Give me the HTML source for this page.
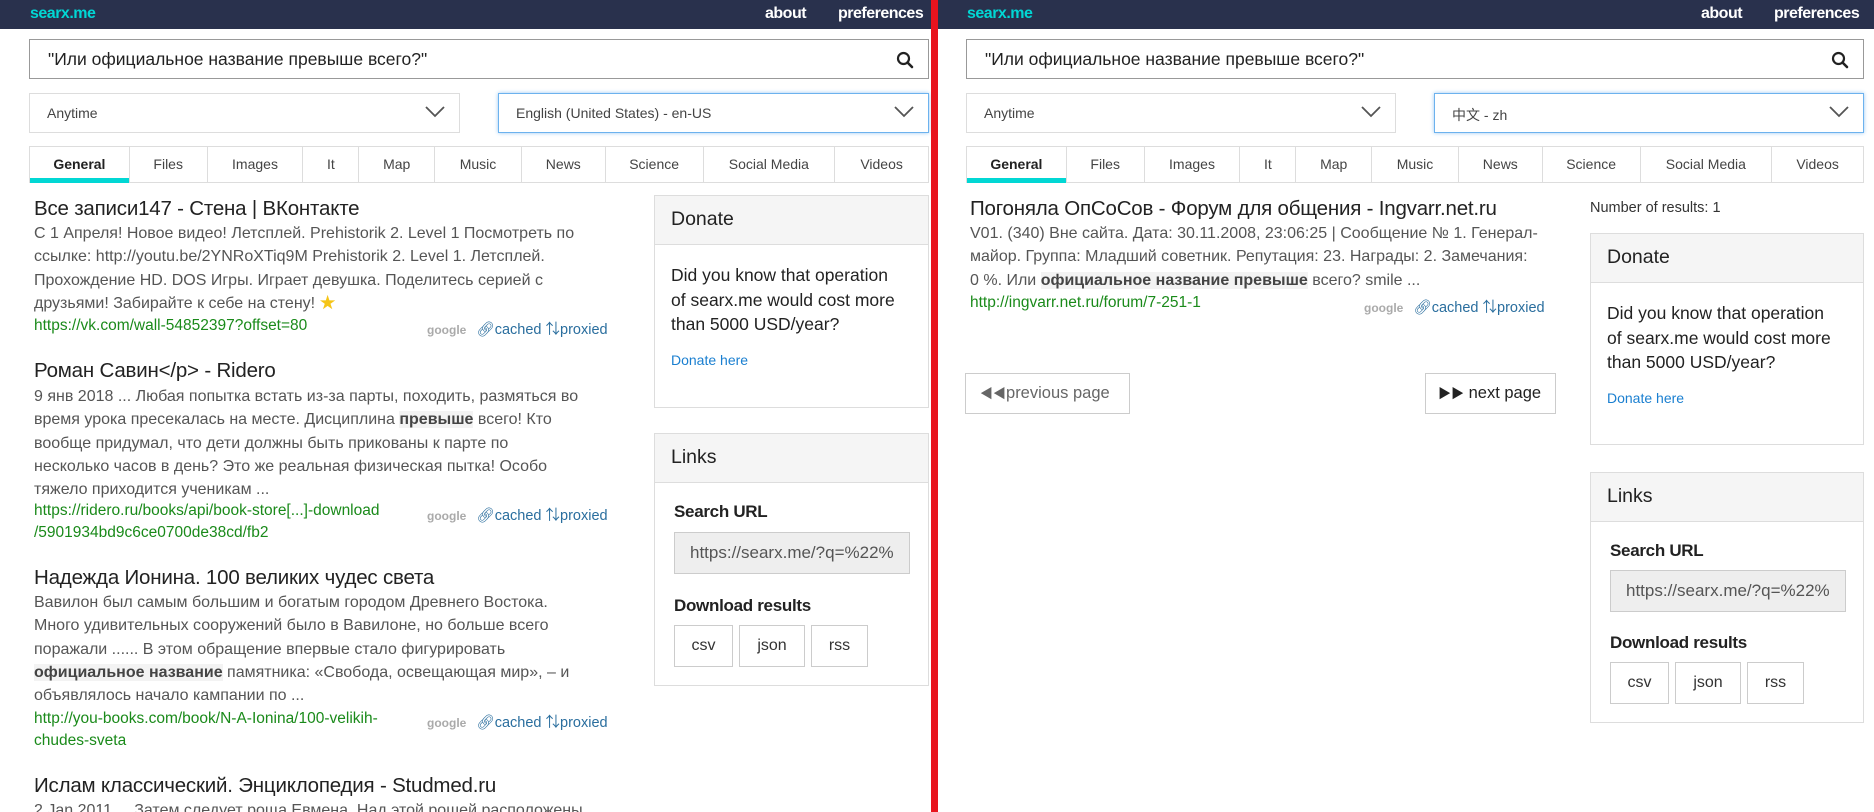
<!DOCTYPE html>
<html><head><meta charset="utf-8">
<style>
*{box-sizing:border-box;margin:0;padding:0}
body{width:1874px;height:812px;overflow:hidden;background:#fff;font-family:"Liberation Sans","Noto Sans CJK SC",sans-serif;position:relative;color:#222}
.pane{position:absolute;top:0;height:812px;overflow:hidden;background:#fff}
.a{position:absolute;white-space:nowrap}
.nav{left:0;top:0;height:29px;background:#29314d;width:100%}
.logo{color:#01d7d4;font-weight:bold;font-size:16px;top:5px;left:30px;letter-spacing:-0.5px}
.nl{color:#fff;font-weight:bold;font-size:16px;top:5px;letter-spacing:-0.5px}
.sbox{left:29px;top:39px;width:900px;height:40px;border:1px solid #999;font-size:17.5px;color:#222;padding:9px 0 0 18px}
.sel{top:93px;height:40px;border:1px solid #ddd;font-size:14px;color:#444;padding:11px 0 0 17px}
.sel.f{border-color:#6cb2ee;box-shadow:0 0 4px #9cc9f2}
.chev{position:absolute;right:14px;top:12px}
.tabs{left:29px;top:146px;width:900px;height:37px;border:1px solid #ddd;display:flex}
.tab{border-right:1px solid #ddd;font-size:14px;color:#444;text-align:center;line-height:35px;position:relative}
.tab:last-child{border-right:none}
.tab.on{font-weight:bold;color:#222}
.tab.on:after{content:"";position:absolute;left:0;right:0;bottom:-1px;height:5px;background:#01d7d4}
.t{font-size:20.5px;color:#222;letter-spacing:-0.2px}
.s{font-size:16px;color:#555;line-height:23.3px}
.s b{background:#f3f3f3;color:#444}
.u{font-size:15.5px;color:#1a8a1a;line-height:21.5px}
.eng{font-size:14.5px;color:#2a6e9e}
.eng .g{color:#aaa;font-weight:bold;font-size:12px;margin-right:10px}
.panel{border:1px solid #ddd;background:#fff}
.ph{height:49px;background:#f5f5f5;border-bottom:1px solid #ddd;font-size:19.5px;color:#222;padding:12px 0 0 16px}
.pb{padding:0 16px}
.btn{position:absolute;border:1px solid #ccc;font-size:16px;color:#333;text-align:center;line-height:40px;height:42px}
.pg{position:absolute;border:1px solid #ccc;font-size:16.5px;height:41px;line-height:39px;white-space:nowrap}
.h{font-size:17px;font-weight:bold;letter-spacing:-0.3px}
</style></head><body>

<!-- LEFT PANE -->
<div class="pane" style="left:0;width:931px">
 <div class="a nav"></div>
 <div class="a logo">searx.me</div>
 <div class="a nl" style="left:765px">about</div>
 <div class="a nl" style="left:838px">preferences</div>
 <div class="a sbox">"Или официальное название превыше всего?"
  <svg style="position:absolute;right:14px;top:11px" width="18" height="18" viewBox="0 0 18 18"><circle cx="7.5" cy="7.5" r="5.5" fill="none" stroke="#222" stroke-width="2.2"/><path d="M11.5 11.5L16 16" stroke="#222" stroke-width="2.6" stroke-linecap="round"/></svg></div>
 <div class="a sel" style="left:29px;width:431px">Anytime<svg class="chev" width="20" height="12" viewBox="0 0 20 12"><path d="M1 1L10 10L19 1" fill="none" stroke="#555" stroke-width="1.8"/></svg></div>
 <div class="a sel f" style="left:498px;width:431px">English (United States) - en-US<svg class="chev" width="20" height="12" viewBox="0 0 20 12"><path d="M1 1L10 10L19 1" fill="none" stroke="#555" stroke-width="1.8"/></svg></div>
 <div class="a tabs">
  <div class="tab on" style="width:100px">General</div><div class="tab" style="width:78px">Files</div><div class="tab" style="width:96px">Images</div><div class="tab" style="width:56px">It</div><div class="tab" style="width:76px">Map</div><div class="tab" style="width:87px">Music</div><div class="tab" style="width:84px">News</div><div class="tab" style="width:98px">Science</div><div class="tab" style="width:132px">Social Media</div><div class="tab" style="width:93px">Videos</div>
 </div>

 <div class="a t" style="left:34px;top:197px">Все записи147 - Стена | ВКонтакте</div>
 <div class="a s" style="left:34px;top:222px">С 1 Апреля! Новое видео! Летсплей. Prehistorik 2. Level 1 Посмотреть по<br>ссылке: http://youtu.be/2YNRoXTiq9M Prehistorik 2. Level 1. Летсплей.<br>Прохождение HD. DOS Игры. Играет девушка. Поделитесь серией с<br>друзьями! Забирайте к себе на стену! <span style="color:#f5c518">★</span></div>
 <div class="a u" style="left:34px;top:315px">https://vk.com/wall-54852397?offset=80</div>
 <div class="a eng" style="left:427px;top:318px"><span class="g">google</span>🔗︎cached ⇅proxied</div>

 <div class="a t" style="left:34px;top:359px">Роман Савин&lt;/p&gt; - Ridero</div>
 <div class="a s" style="left:34px;top:385px">9 янв 2018 ... Любая попытка встать из-за парты, походить, размяться во<br>время урока пресекалась на месте. Дисциплина <b>превыше</b> всего! Кто<br>вообще придумал, что дети должны быть прикованы к парте по<br>несколько часов в день? Это же реальная физическая пытка! Особо<br>тяжело приходится ученикам ...</div>
 <div class="a u" style="left:34px;top:500px">https://ridero.ru/books/api/book-store[...]-download<br>/5901934bd9c6ce0700de38cd/fb2</div>
 <div class="a eng" style="left:427px;top:504px"><span class="g">google</span>🔗︎cached ⇅proxied</div>

 <div class="a t" style="left:34px;top:566px">Надежда Ионина. 100 великих чудес света</div>
 <div class="a s" style="left:34px;top:591px">Вавилон был самым большим и богатым городом Древнего Востока.<br>Много удивительных сооружений было в Вавилоне, но больше всего<br>поражали ...... В этом обращение впервые стало фигурировать<br><b>официальное название</b> памятника: «Свобода, освещающая мир», – и<br>объявлялось начало кампании по ...</div>
 <div class="a u" style="left:34px;top:708px">http://you-books.com/book/N-A-Ionina/100-velikih-<br>chudes-sveta</div>
 <div class="a eng" style="left:427px;top:711px"><span class="g">google</span>🔗︎cached ⇅proxied</div>

 <div class="a t" style="left:34px;top:774px">Ислам классический. Энциклопедия - Studmed.ru</div>
 <div class="a s" style="left:34px;top:799px">2 Jan 2011 ... Затем следует роща Евмена. Над этой рощей расположены</div>

 <div class="a panel" style="left:654px;top:195px;width:275px;height:213px">
  <div class="ph">Donate</div>
  <div class="pb" style="font-size:17.5px;line-height:24.5px;padding-top:18px;white-space:nowrap">Did you know that operation<br>of searx.me would cost more<br>than 5000 USD/year?</div>
  <div class="pb" style="font-size:14px;color:#1a7fd0;margin-top:15px">Donate here</div>
 </div>
 <div class="a panel" style="left:654px;top:433px;width:275px;height:253px">
  <div class="ph">Links</div>
  <div class="a h" style="left:19px;top:68px">Search URL</div>
  <div class="a" style="left:19px;top:98px;width:236px;height:42px;background:#eee;border:1px solid #ccc;font-size:17px;color:#555;padding:10px 0 0 15px;overflow:hidden">https://searx.me/?q=%22%</div>
  <div class="a h" style="left:19px;top:162px">Download results</div>
  <div class="btn" style="left:19px;top:191px;width:59px">csv</div>
  <div class="btn" style="left:84px;top:191px;width:66px">json</div>
  <div class="btn" style="left:156px;top:191px;width:57px">rss</div>
 </div>
</div>

<div style="position:absolute;left:931px;top:0;width:7px;height:812px;background:#e8141e"></div>

<!-- RIGHT PANE -->
<div class="pane" style="left:938px;width:936px">
 <div class="a nav"></div>
 <div class="a logo" style="left:29px">searx.me</div>
 <div class="a nl" style="left:763px">about</div>
 <div class="a nl" style="left:836px">preferences</div>
 <div class="a sbox" style="left:28px;width:898px">"Или официальное название превыше всего?"
  <svg style="position:absolute;right:14px;top:11px" width="18" height="18" viewBox="0 0 18 18"><circle cx="7.5" cy="7.5" r="5.5" fill="none" stroke="#222" stroke-width="2.2"/><path d="M11.5 11.5L16 16" stroke="#222" stroke-width="2.6" stroke-linecap="round"/></svg></div>
 <div class="a sel" style="left:28px;width:430px">Anytime<svg class="chev" width="20" height="12" viewBox="0 0 20 12"><path d="M1 1L10 10L19 1" fill="none" stroke="#555" stroke-width="1.8"/></svg></div>
 <div class="a sel f" style="left:496px;width:430px">中文 - zh<svg class="chev" width="20" height="12" viewBox="0 0 20 12"><path d="M1 1L10 10L19 1" fill="none" stroke="#555" stroke-width="1.8"/></svg></div>
 <div class="a tabs" style="left:28px;width:898px">
  <div class="tab on" style="width:100px">General</div><div class="tab" style="width:78px">Files</div><div class="tab" style="width:96px">Images</div><div class="tab" style="width:56px">It</div><div class="tab" style="width:76px">Map</div><div class="tab" style="width:87px">Music</div><div class="tab" style="width:84px">News</div><div class="tab" style="width:98px">Science</div><div class="tab" style="width:132px">Social Media</div><div class="tab" style="width:91px">Videos</div>
 </div>

 <div class="a t" style="left:32px;top:197px">Погоняла ОпСоСов - Форум для общения - Ingvarr.net.ru</div>
 <div class="a s" style="left:32px;top:222px">V01. (340) Вне сайта. Дата: 30.11.2008, 23:06:25 | Сообщение № 1. Генерал-<br>майор. Группа: Младший советник. Репутация: 23. Награды: 2. Замечания:<br>0 %. Или <b>официальное название превыше</b> всего? smile ...</div>
 <div class="a u" style="left:32px;top:292px">http://ingvarr.net.ru/forum/7-251-1</div>
 <div class="a eng" style="left:426px;top:296px"><span class="g">google</span>🔗︎cached ⇅proxied</div>

 <div class="pg" style="left:27px;top:373px;width:165px;color:#666;padding-left:14px"><span style="font-size:13px">◀◀</span>︎previous page</div>
 <div class="pg" style="left:487px;top:373px;width:131px;color:#222;padding-left:12px"><span style="font-size:13px">▶▶</span>︎ next page</div>

 <div class="a" style="left:652px;top:200px;font-size:14.5px;color:#333">Number of results: 1</div>

 <div class="a panel" style="left:652px;top:233px;width:274px;height:212px">
  <div class="ph">Donate</div>
  <div class="pb" style="font-size:17.5px;line-height:24.5px;padding-top:18px;white-space:nowrap">Did you know that operation<br>of searx.me would cost more<br>than 5000 USD/year?</div>
  <div class="pb" style="font-size:14px;color:#1a7fd0;margin-top:15px">Donate here</div>
 </div>
 <div class="a panel" style="left:652px;top:472px;width:274px;height:251px">
  <div class="ph">Links</div>
  <div class="a h" style="left:19px;top:68px">Search URL</div>
  <div class="a" style="left:19px;top:97px;width:236px;height:42px;background:#eee;border:1px solid #ccc;font-size:17px;color:#555;padding:10px 0 0 15px;overflow:hidden">https://searx.me/?q=%22%</div>
  <div class="a h" style="left:19px;top:160px">Download results</div>
  <div class="btn" style="left:19px;top:189px;width:59px">csv</div>
  <div class="btn" style="left:84px;top:189px;width:66px">json</div>
  <div class="btn" style="left:156px;top:189px;width:57px">rss</div>
 </div>
</div>
</body></html>
